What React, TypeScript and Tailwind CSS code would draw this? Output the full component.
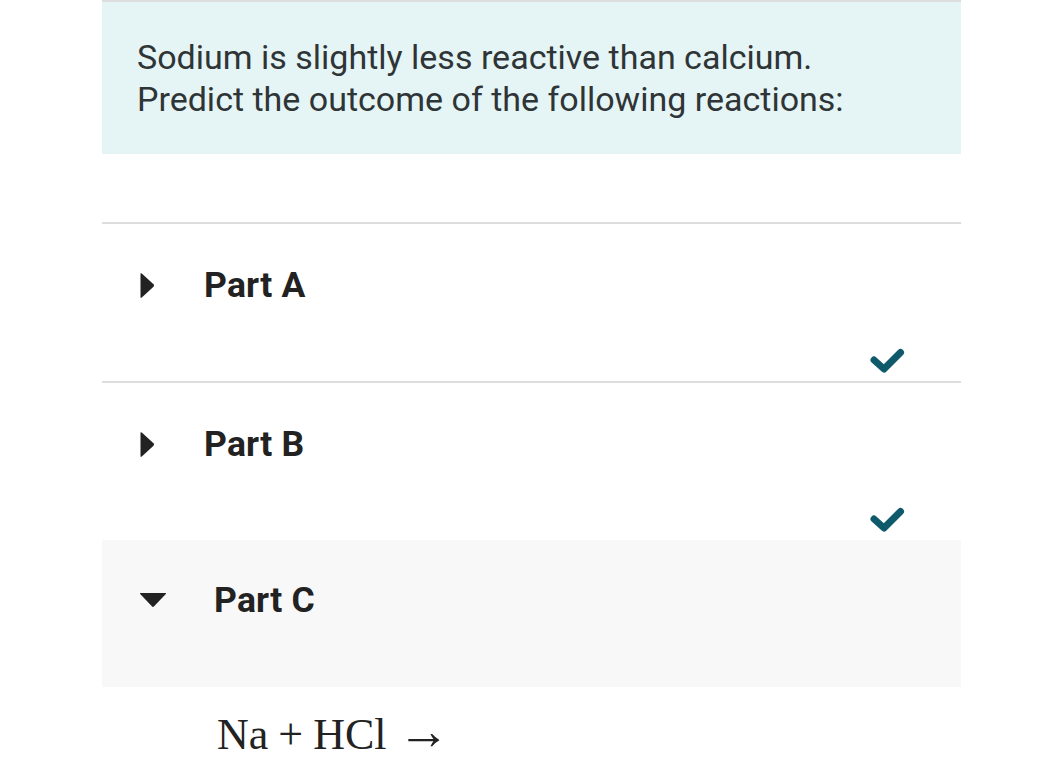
import React from "react";

function Check() {
  return (
    <svg width="36" height="30" viewBox="0 0 36 30" className="block">
      <polyline
        points="5,13 15,22 31.5,5.5"
        fill="none"
        stroke="#0e5a6b"
        strokeWidth="7"
        strokeLinecap="round"
        strokeLinejoin="round"
      />
    </svg>
  );
}

function RightTri() {
  return (
    <svg width="16" height="27" viewBox="0 0 16 27" className="block">
      <path d="M1.5 2 Q1.5 0.5 2.8 1.6 L14.5 12.3 Q15.5 13.5 14.5 14.7 L2.8 25.4 Q1.5 26.5 1.5 25 Z" fill="#222" />
    </svg>
  );
}

function DownTri() {
  return (
    <svg width="28" height="16" viewBox="0 0 28 16" className="block">
      <path d="M1.5 1 L26.5 1 Q27.5 1 26.8 2 L14.9 14.6 Q14 15.5 13.1 14.6 L1.2 2 Q0.5 1 1.5 1 Z" fill="#222" />
    </svg>
  );
}

function Part({ label, bordered }: { label: string; bordered: boolean }) {
  return (
    <div
      className={
        bordered
          ? "flex h-[159px] flex-col border-b-2 border-[#dddddd]"
          : "flex h-[157px] flex-col"
      }
    >
      <div className="mt-[41px] flex h-[40px] items-center pl-[37px]">
        <RightTri />
        <span className="ml-[49px] text-[35.5px] font-bold leading-[40px] tracking-[0.2px] text-[#222222]">{label}</span>
      </div>
      <div className="mt-[42px] flex justify-end pr-[56px]">
        <Check />
      </div>
    </div>
  );
}

export default function App() {
  return (
    <div
      className="min-h-[761px] bg-white"
      style={{ fontFamily: "Roboto, 'Noto Sans', sans-serif" }}
    >
      <div className="ml-[102px] w-[859px] border-t-2 border-[#dddddd]">
        <div className="h-[152px] bg-[#e5f5f5] pl-[35px] pt-[34px] text-[34px] leading-[42px] text-[#2f3436]">
          <p>Sodium is slightly less reactive than calcium.</p>
          <p>Predict the outcome of the following reactions:</p>
        </div>
        <div className="h-[70px] border-b-2 border-[#dddddd]" />
        <Part label="Part A" bordered={true} />
        <Part label="Part B" bordered={false} />
        <div className="h-[147px] bg-[#f8f8f8] pt-[40px]">
          <div className="flex h-[40px] items-center pl-[37px]">
            <DownTri />
            <span className="ml-[47px] text-[35.5px] font-bold leading-[40px] tracking-[0.2px] text-[#222222]">Part C</span>
          </div>
        </div>
        <div
          className="flex items-baseline pl-[115px] pt-[17px] text-[44px] leading-[56px] text-[#222222]"
          style={{ fontFamily: "'Liberation Serif', 'DejaVu Serif', serif" }}
        >
          <span>Na</span>
          <span className="mx-[10px]">+</span>
          <span>HCl</span>
          <span className="ml-[11px] text-[52px] leading-[56px]">→</span>
        </div>
      </div>
    </div>
  );
}
